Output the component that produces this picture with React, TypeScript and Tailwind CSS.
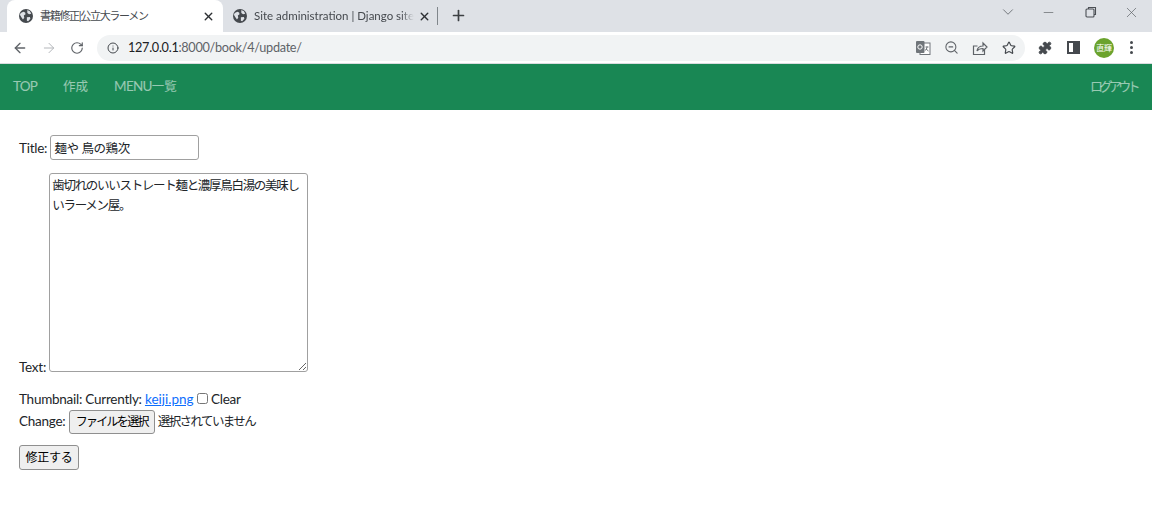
import { ArrowLeft, ArrowRight, RotateCw, Info, X, Plus, ChevronDown, Minus, ZoomOut, Star, Puzzle } from "lucide-react"

const font = "font-['Lato','Noto_Sans_CJK_JP',sans-serif]"

const Globe = () => (
  <svg width="14" height="14" viewBox="0 0 16 16" className="shrink-0">
    <circle cx="8" cy="8" r="8" fill="#45494e" />
    <path d="M2 4.500 5 3l2 1 .5 2-2 1.500.5 2.500-1.500 2L2.500 9 1 6.500zM9.500 1l3 1.500 1.500 3-2.500.5-2-1.500zM9 9.500l3.500-.5.5 2-2.500 3-1.500-.5z" fill="#dee1e6" />
  </svg>
)

const Tab = ({ title, active }: { title: string; active?: boolean }) => (
  <div className={`flex h-[32px] items-center ${active ? "w-[216px] rounded-t-lg bg-white pl-[12px] pr-[8px]" : "w-[214px] pl-[10px] pr-[6px]"}`}>
    <Globe />
    <span className={`ml-[7px] flex-1 overflow-hidden whitespace-nowrap text-[#45494e] ${active ? "text-[11px] tracking-[-1.300px]" : "text-[11.500px] [mask-image:linear-gradient(to_right,black_92%,transparent)]"}`}>{title}</span>
    <X size={13} strokeWidth={2.600} className="ml-1 shrink-0 text-[#2c2f33]" />
  </div>
)

const Translate = () => (
  <svg width="16" height="16" viewBox="0 0 16 16">
    <rect x="5" y="3" width="10" height="11.500" fill="#fff" stroke="#70757a" />
    <rect x="1" y="1" width="8.500" height="12" rx="1" fill="#70757a" />
    <circle cx="5" cy="7" r="2.200" fill="none" stroke="#fff" />
    <path d="M10.500 7h3M12 6.500c0 2-1 3.500-2 4M11 9l2.500 2" stroke="#70757a" fill="none" />
  </svg>
)

const Share = () => (
  <svg width="16" height="16" viewBox="0 0 16 16" fill="none" stroke="#5f6368" strokeWidth="1.200">
    <path d="M5.500 6H1.500v8.500h11V10" />
    <path d="M5 11c.5-3.500 3-5 6-5V3l4 4-4 4V8.500c-2.500 0-4.500.5-6 2.500z" />
  </svg>
)

export default function App() {
  return (
    <div className={`h-[530px] w-[1152px] overflow-hidden bg-white ${font} text-[13.500px] leading-[21.600px] tracking-[-0.250px] text-[#212529]`}>
      <div className="flex h-[32px] items-end bg-[#dee1e6] pl-[7px] tracking-normal">
        <Tab title="書籍修正|公立大ラーメン" active />
        <Tab title="Site administration | Django site admin" />
        <div className="mb-[7px] h-[18px] w-px bg-[#80868b]" />
        <Plus size={17} strokeWidth={2.400} className="mb-[8px] ml-[12px] text-[#3c4043]" />
        <div className="flex-1" />
        <div className="mb-[11px] flex items-center text-[#5f6368]">
          <ChevronDown size={18} strokeWidth={1.100} />
          <Minus size={15} strokeWidth={1.100} className="ml-[24px]" />
          <svg width="12" height="12" viewBox="0 0 12 12" fill="none" stroke="#4b4f54" strokeWidth="1.100" className="ml-[29px]">
            <rect x="1" y="3" width="8" height="8" rx="1" />
            <path d="M3.500 3V1.500h7v7H9" />
          </svg>
          <X size={17} strokeWidth={1} className="ml-[26px] mr-[12px]" />
        </div>
      </div>

      <div className="flex h-[31px] items-center bg-white pl-[12px]">
        <ArrowLeft size={16} strokeWidth={2} className="text-[#5f6368]" />
        <ArrowRight size={16} strokeWidth={1.500} className="ml-[13px] text-[#b4b7bb]" />
        <RotateCw size={14} strokeWidth={2} className="ml-[13px] text-[#5f6368]" />
        <div className="ml-[13px] flex h-[26px] w-[928px] items-center rounded-full bg-[#f1f3f4] pl-[10px]">
          <Info size={12} strokeWidth={2} className="text-[#45494e]" />
          <span className="ml-[9px] text-[12.700px] tracking-[-0.300px] text-[#202124]">127.0.0.1<span className="text-[#5f6368]">:8000/book/4/update/</span></span>
          <div className="flex-1" />
          <Translate />
          <ZoomOut size={15} strokeWidth={1.700} className="ml-[13px] text-[#5f6368]" />
          <div className="ml-[13px]"><Share /></div>
          <Star size={14} strokeWidth={2} className="ml-[14px] mr-[9px] text-[#45494e]" />
        </div>
        <Puzzle size={14} fill="#45494e" strokeWidth={1.500} className="ml-[13px] text-[#45494e]" />
        <div className="ml-[15px] flex h-[13px] w-[13px] justify-end border-2 border-[#45494e]"><div className="h-full w-[5px] bg-[#45494e]" /></div>
        <div className="ml-[14px] flex h-[20px] w-[20px] items-center justify-center rounded-full bg-[#6ba32d] text-[8px] leading-none text-white">直輝</div>
        <div className="ml-[16px] flex flex-col gap-[2px]">
          <div className="h-[3px] w-[3px] rounded-full bg-[#45494e]" />
          <div className="h-[3px] w-[3px] rounded-full bg-[#45494e]" />
          <div className="h-[3px] w-[3px] rounded-full bg-[#45494e]" />
        </div>
      </div>
      <div className="h-px bg-[#dadce0]" />

      <nav className="flex h-[46px] items-center justify-between bg-[#198754] px-[13px] text-white/55">
        <div className="flex items-center gap-[26px]">
          <a className="tracking-[-0.800px]">TOP</a>
          <a className="text-[12.500px] tracking-normal">作成</a>
          <a className="tracking-[-0.700px]">MENU<span className="text-[12.500px] tracking-normal">一覧</span></a>
        </div>
        <a className="pr-[2px] text-[13px] tracking-[-3.600px]">ログアウト</a>
      </nav>

      <form className="px-[19px] pt-[25px]">
        <p className="mb-[13px]">
          <label>Title: </label>
          <input defaultValue="麺や 鳥の鶏次" className="h-[25px] w-[149px] rounded-[3px] border border-[#a0a0a0] px-[3px] align-baseline text-[12.500px] tracking-[-0.400px] outline-none" />
        </p>
        <p className="mb-[10px]">
          <label>Text: </label>
          <textarea
            defaultValue="歯切れのいいストレート麺と濃厚鳥白湯の美味しいラーメン屋。"
            className="h-[199px] w-[259px] rounded-[3px] border border-[#a0a0a0] px-[2px] py-[2px] align-baseline text-[12.500px] leading-[19.500px] tracking-[-1.300px] outline-none"
          />
        </p>
        <p>
          Thumbnail: Currently: <a className="tracking-normal text-[#0d6efd] underline">keiji.png</a>{" "}
          <input type="checkbox" className="m-0 h-[11px] w-[11px] appearance-auto" /> Clear
          <br />
          Change: <button type="button" className="h-[24px] rounded-[3px] border border-[#8f8f8f] bg-[#efefef] px-[6px] text-[12px] leading-none tracking-[-1.700px] text-black">ファイルを選択</button>
          <span className="ml-[3px] text-[12.500px] tracking-[-1.600px]">選択されていません</span>
        </p>
        <button type="button" className="mt-[11px] h-[25px] w-[60px] rounded-[3px] border border-[#8f8f8f] bg-[#efefef] text-[12px] leading-none tracking-[-0.200px] text-black">修正する</button>
      </form>
    </div>
  )
}
